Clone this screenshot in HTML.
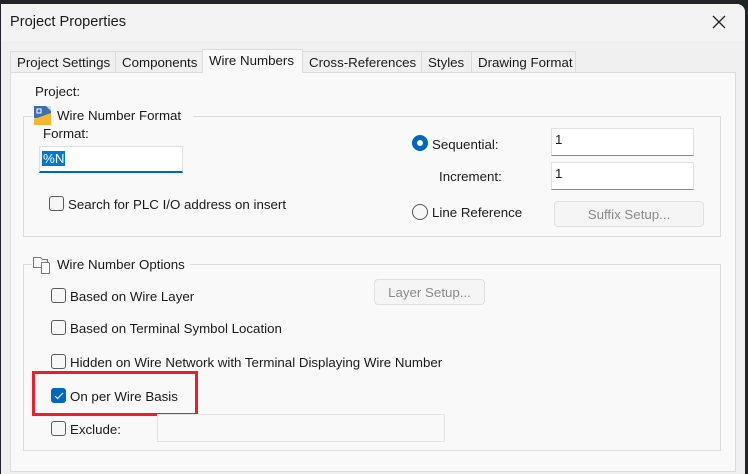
<!DOCTYPE html>
<html><head><style>
*{margin:0;padding:0;box-sizing:border-box}
body{width:748px;height:463px;background:#202328;position:relative;overflow:hidden;font-family:"Liberation Sans",sans-serif;font-size:13.3px;color:#1a1a1a}
.dlg{position:absolute;left:1px;top:4px;width:744px;height:470px;background:#f0f0f0;border-top-right-radius:8px}
.title{position:absolute;left:0;top:0;width:744px;height:37px;background:#f3f3f3;border-top-right-radius:8px}
.abs{position:absolute;white-space:nowrap}
.tab{position:absolute;top:47px;height:21px;background:#f0f0f0;border:1px solid #dcdcdc;border-bottom:none;padding:3px 0 0 6px}
.panel{position:absolute;left:9px;top:68px;width:726px;height:400px;background:#f9f9f9;border:1px solid #dcdcdc}
.grp{position:absolute;border:1px solid #dcdcdc}
.cb{position:absolute;width:15px;height:15px;border:1px solid #5a5a5a;border-radius:3px;background:#f7f7f7}
.inp{position:absolute;background:#fff;border:1px solid #e0e0e0;border-bottom:1px solid #8a8a8a}
.btn{position:absolute;border:1px solid #e0e0e0;border-radius:4px;background:#f5f5f5;color:#8a8a8a;text-align:center;padding-top:5px}
</style></head><body>
<div class="dlg">
<div class="title"></div>
<div class="abs" style="left:9px;top:10px;font-size:14.6px">Project Properties</div>
<svg class="abs" style="left:711px;top:11px" width="14" height="14"><path d="M1 1L13 13M13 1L1 13" stroke="#222" stroke-width="1.3"/></svg>
<div class="tab" style="left:9px;width:106px">Project Settings</div>
<div class="tab" style="left:114px;width:88px">Components</div>
<div class="tab" style="left:301px;width:120px">Cross-References</div>
<div class="tab" style="left:420px;width:51px">Styles</div>
<div class="tab" style="left:470px;width:105px">Drawing Format</div>
<div class="panel"></div>
<div class="tab" style="left:201px;top:45px;height:24px;width:101px;background:#f9f9f9;padding-top:3px">Wire Numbers</div>
<div class="abs" style="left:34px;top:80px">Project:</div>
<div class="grp" style="left:22px;top:112px;width:698px;height:121px"></div>
<div class="abs" style="left:32px;top:103px;width:160px;height:18px;background:#f9f9f9"></div>
<svg class="abs" style="left:33px;top:102px" width="17" height="19"><rect x="0" y="0" width="17" height="19" fill="#ddd"/><path d="M0 0h12l5 5v7H0z" fill="#3d6fb0"/><path d="M0 19V13l17-6v12z" fill="#f2b630"/><path d="M3 3h4v4H3z" fill="none" stroke="#fff"/></svg>
<div class="abs" style="left:56px;top:104px">Wire Number Format</div>
<div class="abs" style="left:42px;top:122px">Format:</div>
<div class="inp" style="left:38px;top:142px;width:144px;height:27px;border-bottom:2px solid #0067c0"></div>
<div class="abs" style="left:41px;top:147px;background:#0078d4;color:#fff;padding:0 1px">%N</div>
<div class="cb" style="left:48px;top:192px"></div>
<div class="abs" style="left:67px;top:193px">Search for PLC I/O address on insert</div>
<div class="abs" style="left:411px;top:131px;width:16px;height:16px;border-radius:50%;background:#0067c0"></div>
<div class="abs" style="left:416px;top:136px;width:6px;height:6px;border-radius:50%;background:#fff"></div>
<div class="abs" style="left:431px;top:133px">Sequential:</div>
<div class="abs" style="left:438px;top:165px">Increment:</div>
<div class="inp" style="left:550px;top:124px;width:143px;height:28px"></div>
<div class="abs" style="left:554px;top:128px">1</div>
<div class="inp" style="left:550px;top:158px;width:143px;height:28px"></div>
<div class="abs" style="left:554px;top:162px">1</div>
<div class="abs" style="left:411px;top:200px;width:16px;height:16px;border-radius:50%;border:1px solid #555;background:#f7f7f7"></div>
<div class="abs" style="left:431px;top:201px">Line Reference</div>
<div class="btn" style="left:553px;top:197px;width:150px;height:26px">Suffix Setup...</div>
<div class="grp" style="left:22px;top:260px;width:698px;height:187px"></div>
<div class="abs" style="left:31px;top:252px;width:158px;height:18px;background:#f9f9f9"></div>
<svg class="abs" style="left:32px;top:251px" width="17" height="19"><path d="M0.5 2.5h7l2 2h5v5M0.5 2.5v10h8" fill="none" stroke="#777"/><path d="M10.5 7.5h5l1 1v10h-8v-11z" fill="#fff" stroke="#777"/></svg>
<div class="abs" style="left:56px;top:253px">Wire Number Options</div>
<div class="cb" style="left:50px;top:284px"></div>
<div class="abs" style="left:69px;top:285px">Based on Wire Layer</div>
<div class="btn" style="left:373px;top:275px;width:111px;height:26px">Layer Setup...</div>
<div class="cb" style="left:50px;top:316px"></div>
<div class="abs" style="left:69px;top:317px">Based on Terminal Symbol Location</div>
<div class="cb" style="left:50px;top:350px"></div>
<div class="abs" style="left:69px;top:351px">Hidden on Wire Network with Terminal Displaying Wire Number</div>
<div class="cb" style="left:50px;top:384px;background:#0067c0;border-color:#0067c0"></div>
<svg class="abs" style="left:53px;top:388px" width="10" height="8"><path d="M1 4l2.5 2.5L9 1" fill="none" stroke="#fff" stroke-width="1.2"/></svg>
<div class="abs" style="left:69px;top:385px">On per Wire Basis</div>
<div class="abs" style="left:31px;top:367px;width:166px;height:45px;border:3px solid #e8202a"></div>
<div class="cb" style="left:50px;top:417px"></div>
<div class="abs" style="left:69px;top:418px">Exclude:</div>
<div class="abs" style="left:156px;top:410px;width:288px;height:28px;border:1px solid #e3e3e3;background:#f9f9f9"></div>
</div>
</body></html>
